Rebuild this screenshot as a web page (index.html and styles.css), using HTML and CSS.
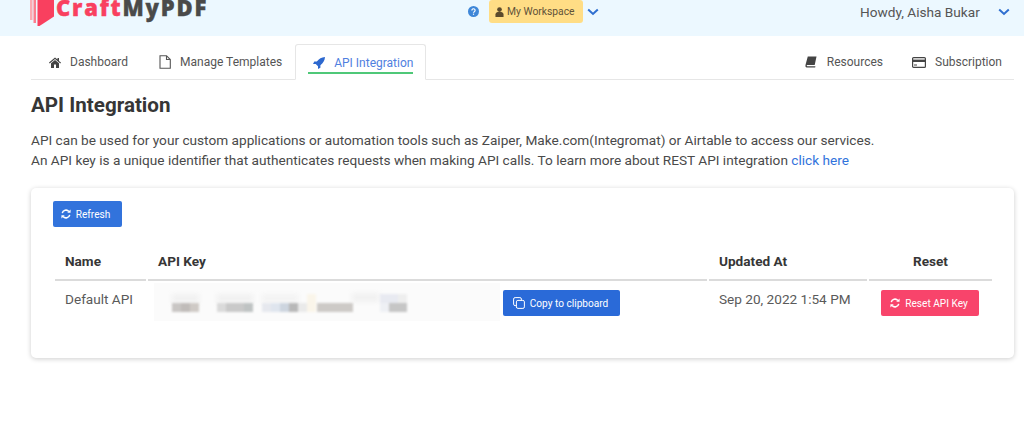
FILE: index.html
```html
<!DOCTYPE html>
<html lang="en">
<head>
<meta charset="utf-8">
<title>API Integration</title>
<link rel="stylesheet" href="styles.css">
</head>
<body>
<header class="topbar">
  <div class="brand">
    <svg class="brand-mark" width="24" height="26" viewBox="0 0 24 26"><path d="M0 0h2.500v20H0z" fill="#fbaab2"/><path d="M3.500 0h2.500v23H3.500z" fill="#fb7f8e"/><path d="M7.500 0H24V16.500L9.500 26H7.500z" fill="#f9405f"/></svg>
    <span class="brand-text"><span class="brand-red">Craft</span><span class="brand-dark">MyPDF</span></span>
  </div>
  <div class="workspace">
    <svg class="help" width="11" height="11" viewBox="0 0 13 13"><circle cx="6.500" cy="6.500" r="6.500" fill="#3f87d8"/><path d="M4.600 5.200a1.900 1.900 0 1 1 2.900 1.600c-.7.4-1 .7-1 1.300" fill="none" stroke="#fff" stroke-width="1.400"/><rect x="5.800" y="9" width="1.400" height="1.400" fill="#fff"/></svg>
    <span class="ws-badge"><svg class="ws-ico" width="9" height="10" viewBox="0 0 10 11"><circle cx="5" cy="2.800" r="2.600" fill="#5b4a2c"/><path d="M.5 11V8.400C.5 6.600 2 5.600 3 5.600h4c1 0 2.500 1 2.500 2.800V11z" fill="#5b4a2c"/></svg>My Workspace</span>
    <svg class="chev" width="12" height="8" viewBox="0 0 12 8"><path d="M1.200 1.500 6 6l4.800-4.500" fill="none" stroke="#2f6fd0" stroke-width="2"/></svg>
  </div>
  <div class="user">
    <span>Howdy, Aisha Bukar</span>
    <svg class="chev" width="12" height="8" viewBox="0 0 12 8"><path d="M1.200 1.500 6 6l4.800-4.500" fill="none" stroke="#2f6fd0" stroke-width="2"/></svg>
  </div>
</header>

<nav class="tabs">
  <a class="tab tab-first"><svg class="ico" width="12" height="11" viewBox="0 0 12 11"><path d="M6 .5 0 5.600l.7.800L6 2l5.300 4.400.7-.8-2-1.700V1H8.500v1.600z" fill="#444"/><path d="M6 3 2 6.300V11h3V7.500h2V11h3V6.300z" fill="#444"/></svg>Dashboard</a>
  <a class="tab tab-second"><svg class="ico" width="12" height="14" viewBox="0 0 12 14"><path d="M1 .7h6.500L11.300 4.500V13.300H1z M7.500 .7V4.500h3.800" fill="none" stroke="#555" stroke-width="1.100"/></svg>Manage Templates</a>
  <a class="tab tab-active"><span class="tab-inner"><svg class="ico" width="12" height="12" viewBox="0 0 12 12"><path d="M12 0C8.500.2 6 1.800 3.800 4.600H1.300L0 7h2.700l2.300 2.300V12l2.400-1.300V8.200C10.200 6 11.800 3.500 12 0z" fill="#2d68cf"/></svg>API Integration</span></a>
  <span class="tab-spacer"></span>
  <a class="tab tab-res"><svg class="ico" width="12" height="12" viewBox="0 0 13 12"><path d="M3 0h9.500L10.500 9.300H2.500c-.8 0-.9 1.400 0 1.400h8.800L11 12H2C.5 12 .3 10.500.6 9z" fill="#444"/></svg>Resources</a>
  <a class="tab tab-last"><svg class="ico" width="14" height="11" viewBox="0 0 14 11"><rect x=".6" y=".6" width="12.800" height="9.800" rx="1" fill="none" stroke="#444" stroke-width="1.200"/><rect x="1" y="2.600" width="12" height="2.400" fill="#444"/><rect x="2" y="7.500" width="3" height="1" fill="#444"/></svg>Subscription</a>
</nav>

<main class="content">
  <h1 class="title">API Integration</h1>
  <p class="intro">API can be used for your custom applications or automation tools such as Zaiper, Make.com(Integromat) or Airtable to access our services.<br>An API key is a unique identifier that authenticates requests when making API calls. To learn more about REST API integration <a class="link">click here</a></p>

  <section class="card">
    <button class="btn btn-refresh"><svg width="10" height="10" viewBox="0 0 12 12"><path d="M1.500 5A4.600 4.600 0 0 1 9.500 3M10.500 7A4.600 4.600 0 0 1 2.500 9" fill="none" stroke="#fff" stroke-width="1.800"/><path d="M11.500.5v4h-4zM.5 11.500v-4h4z" fill="#fff"/></svg>Refresh</button>
    <div class="table">
      <div class="th">Name</div>
      <div class="th">API Key</div>
      <div class="th">Updated At</div>
      <div class="th th-center">Reset</div>
      <div class="td">Default API</div>
      <div class="td td-key">
        <div class="blur" aria-hidden="true">
          <svg width="346" height="38" viewBox="0 0 346 38">
            <rect width="346" height="38" fill="#fbfbfb"/>
            <g class="soft" fill="#f1f1f1"><rect x="18" y="11" width="27" height="9"/><rect x="63" y="11" width="36" height="9"/><rect x="108" y="11" width="36" height="9" fill="#f3f3f3"/><rect x="198" y="10" width="27" height="9"/></g>
            <g class="soft-less">
              <rect x="18" y="20" width="9" height="9" fill="#c9c6c4"/><rect x="27" y="20" width="9" height="9" fill="#c0bcb9"/><rect x="36" y="20" width="9" height="9" fill="#cfcac6"/>
              <rect x="63" y="20" width="9" height="9" fill="#dadada"/><rect x="72" y="20" width="18" height="9" fill="#c9c9c9"/><rect x="90" y="20" width="9" height="9" fill="#bfc3c3"/>
              <rect x="108" y="20" width="9" height="9" fill="#e6e8ee"/><rect x="117" y="20" width="9" height="9" fill="#dfe5ee"/><rect x="126" y="20" width="9" height="9" fill="#cdd5df"/><rect x="135" y="20" width="9" height="9" fill="#b8b8b8"/><rect x="144" y="20" width="9" height="9" fill="#eaeaea"/><rect x="153" y="11" width="9" height="18" fill="#faf5ea"/>
              <rect x="163" y="20" width="36" height="9" fill="#cdcac7"/>
              <rect x="226" y="11" width="18" height="9" fill="#e8eaf1"/><rect x="244" y="11" width="9" height="9" fill="#eeeeee"/><rect x="226" y="20" width="9" height="9" fill="#eef0f4"/><rect x="235" y="20" width="18" height="9" fill="#c6c6c6"/>
            </g>
          </svg>
        </div>
        <button class="btn btn-copy"><svg width="12" height="12" viewBox="0 0 12 12"><rect x=".6" y=".6" width="7.800" height="8" rx="1.500" fill="none" stroke="#fff" stroke-width="1"/><rect x="3.400" y="3.400" width="8" height="8" rx="1.500" fill="#2a6ad8" stroke="#fff" stroke-width="1"/></svg>Copy to clipboard</button>
      </div>
      <div class="td">Sep 20, 2022 1:54 PM</div>
      <div class="td td-center"><button class="btn btn-red"><svg width="10" height="10" viewBox="0 0 12 12"><path d="M1.500 5A4.600 4.600 0 0 1 9.500 3M10.500 7A4.600 4.600 0 0 1 2.500 9" fill="none" stroke="#fff" stroke-width="1.800"/><path d="M11.500.5v4h-4zM.5 11.500v-4h4z" fill="#fff"/></svg>Reset API Key</button></div>
    </div>
  </section>
</main>
</body>
</html>
```

FILE: styles.css
```css
* { box-sizing: border-box; }
html, body { margin: 0; padding: 0; }
body {
  width: 1024px;
  height: 424px;
  overflow: hidden;
  background: #fff;
  font-family: Roboto, "Liberation Sans", sans-serif;
  color: #4a4a4a;
}
.topbar {
  height: 36px;
  background: #ecf8ff;
  display: grid;
  grid-template-columns: 468px 392px 1fr;
  align-items: start;
  overflow: hidden;
}
.brand {
  display: flex;
  align-items: flex-start;
  padding-left: 30px;
  height: 36px;
}
.brand-mark { flex: none; }
.brand-text {
  margin: -4px 0 0 2px;
  font-family: "Open Sans", sans-serif;
  font-size: 22px;
  line-height: 22px;
  font-weight: 800;
  letter-spacing: 1.800px;
  -webkit-text-stroke: 0.4px currentColor;
}
.brand-red { color: #f9405f; }
.brand-dark { color: #4a4a4a; }
.workspace {
  display: flex;
  align-items: center;
  height: 23px;
}
.help { margin-right: 10px; flex: none; }
.ws-badge {
  display: flex;
  align-items: center;
  height: 23px;
  width: 94px;
  flex: none;
  padding-left: 6px;
  background: #ffdd85;
  border-radius: 3px;
  font-size: 10.300px;
  color: #5f5238;
  white-space: nowrap;
}
.ws-ico { flex: none; margin-right: 3px; }
.workspace .chev { margin-left: 4px; }
.user {
  display: flex;
  align-items: center;
  height: 23px;
  font-size: 13.650px;
  color: #555;
}
.user .chev { margin-left: 18px; }
.tabs {
  display: flex;
  align-items: flex-end;
  height: 44px;
  margin: 0 10px 0 31px;
  padding-top: 8px;
  border-bottom: 1px solid #e6e6e6;
  font-size: 12px;
  color: #555;
}
.tab {
  display: flex;
  align-items: center;
  height: 36px;
  white-space: nowrap;
}
.ico { margin-right: 9px; flex: none; }
.tab-first { padding: 2px 16px 0 18px; }
.tab-second { padding: 2px 13px 0 15px; }
.tab-active {
  margin-bottom: -1px;
  padding: 0 12px;
  background: #fff;
  border: 1px solid #e6e6e6;
  border-bottom-color: #fff;
  border-radius: 3px 3px 0 0;
  color: #4f80e0;
}
.tab-inner {
  display: flex;
  align-items: center;
  height: 22px;
  padding: 3px 0 1px 5px;
  margin-top: 2px;
  border-bottom: 2px solid #4fc878;
}
.tab-spacer { flex: 1; }
.tab-res { padding: 2px 17px 0 0; }
.tab-res .ico { margin-right: 10px; }
.tab-last { padding: 2px 12px 0; }
.content { padding: 0 10px 0 31px; }
.title {
  margin: 13px 0 0;
  font-size: 20.600px;
  line-height: 24px;
  font-weight: 700;
  color: #363636;
}
.intro {
  margin: 13px 0 0;
  font-size: 13.650px;
  line-height: 20px;
  color: #4a4a4a;
}
.link { color: #3273dc; }
.card {
  width: 983px;
  height: 170px;
  margin-top: 18px;
  padding: 13px 22px 0;
  background: #fff;
  border-radius: 5px;
  box-shadow: 0 1px 5px rgba(10, 10, 10, 0.2);
}
.btn {
  display: inline-flex;
  align-items: center;
  justify-content: center;
  gap: 5px;
  border: 1px solid transparent;
  border-radius: 2px;
  color: #fff;
  font-family: inherit;
  font-size: 10.100px;
  padding: 0;
}
.btn-red { background: #f8446b; width: 98px; height: 26px; margin-right: 2px; padding-right: 1px; }
.btn-refresh { width: 69px; height: 26px; background: #3273dc; padding-right: 4px; }
.btn-copy { width: 117px; height: 26px; flex: none; background: #2a6ad8; margin-top: 7px; padding-right: 2px; }
.table {
  display: grid;
  grid-template-columns: 91px 559px 158px 123px;
  column-gap: 2px;
  margin: 24px 0 0 2px;
  width: 939px;
}
.th {
  height: 30px;
  padding: 0 10px;
  font-size: 13.600px;
  line-height: 20px;
  font-weight: 700;
  color: #363636;
  border-bottom: 2px solid #dbdbdb;
}
.th-center { text-align: center; }
.td {
  padding: 8px 10px 0;
  font-size: 13.600px;
  line-height: 20px;
  color: #5a5a5a;
}
.td-center { display: flex; justify-content: center; padding-top: 9px; }
.td-key {
  display: flex;
  align-items: flex-start;
  gap: 3px;
  padding: 2px 0 0 6px;
}
.blur { width: 346px; height: 38px; overflow: hidden; flex: none; }
.soft { filter: blur(2px); }
.soft-less { filter: blur(1px); }
```
